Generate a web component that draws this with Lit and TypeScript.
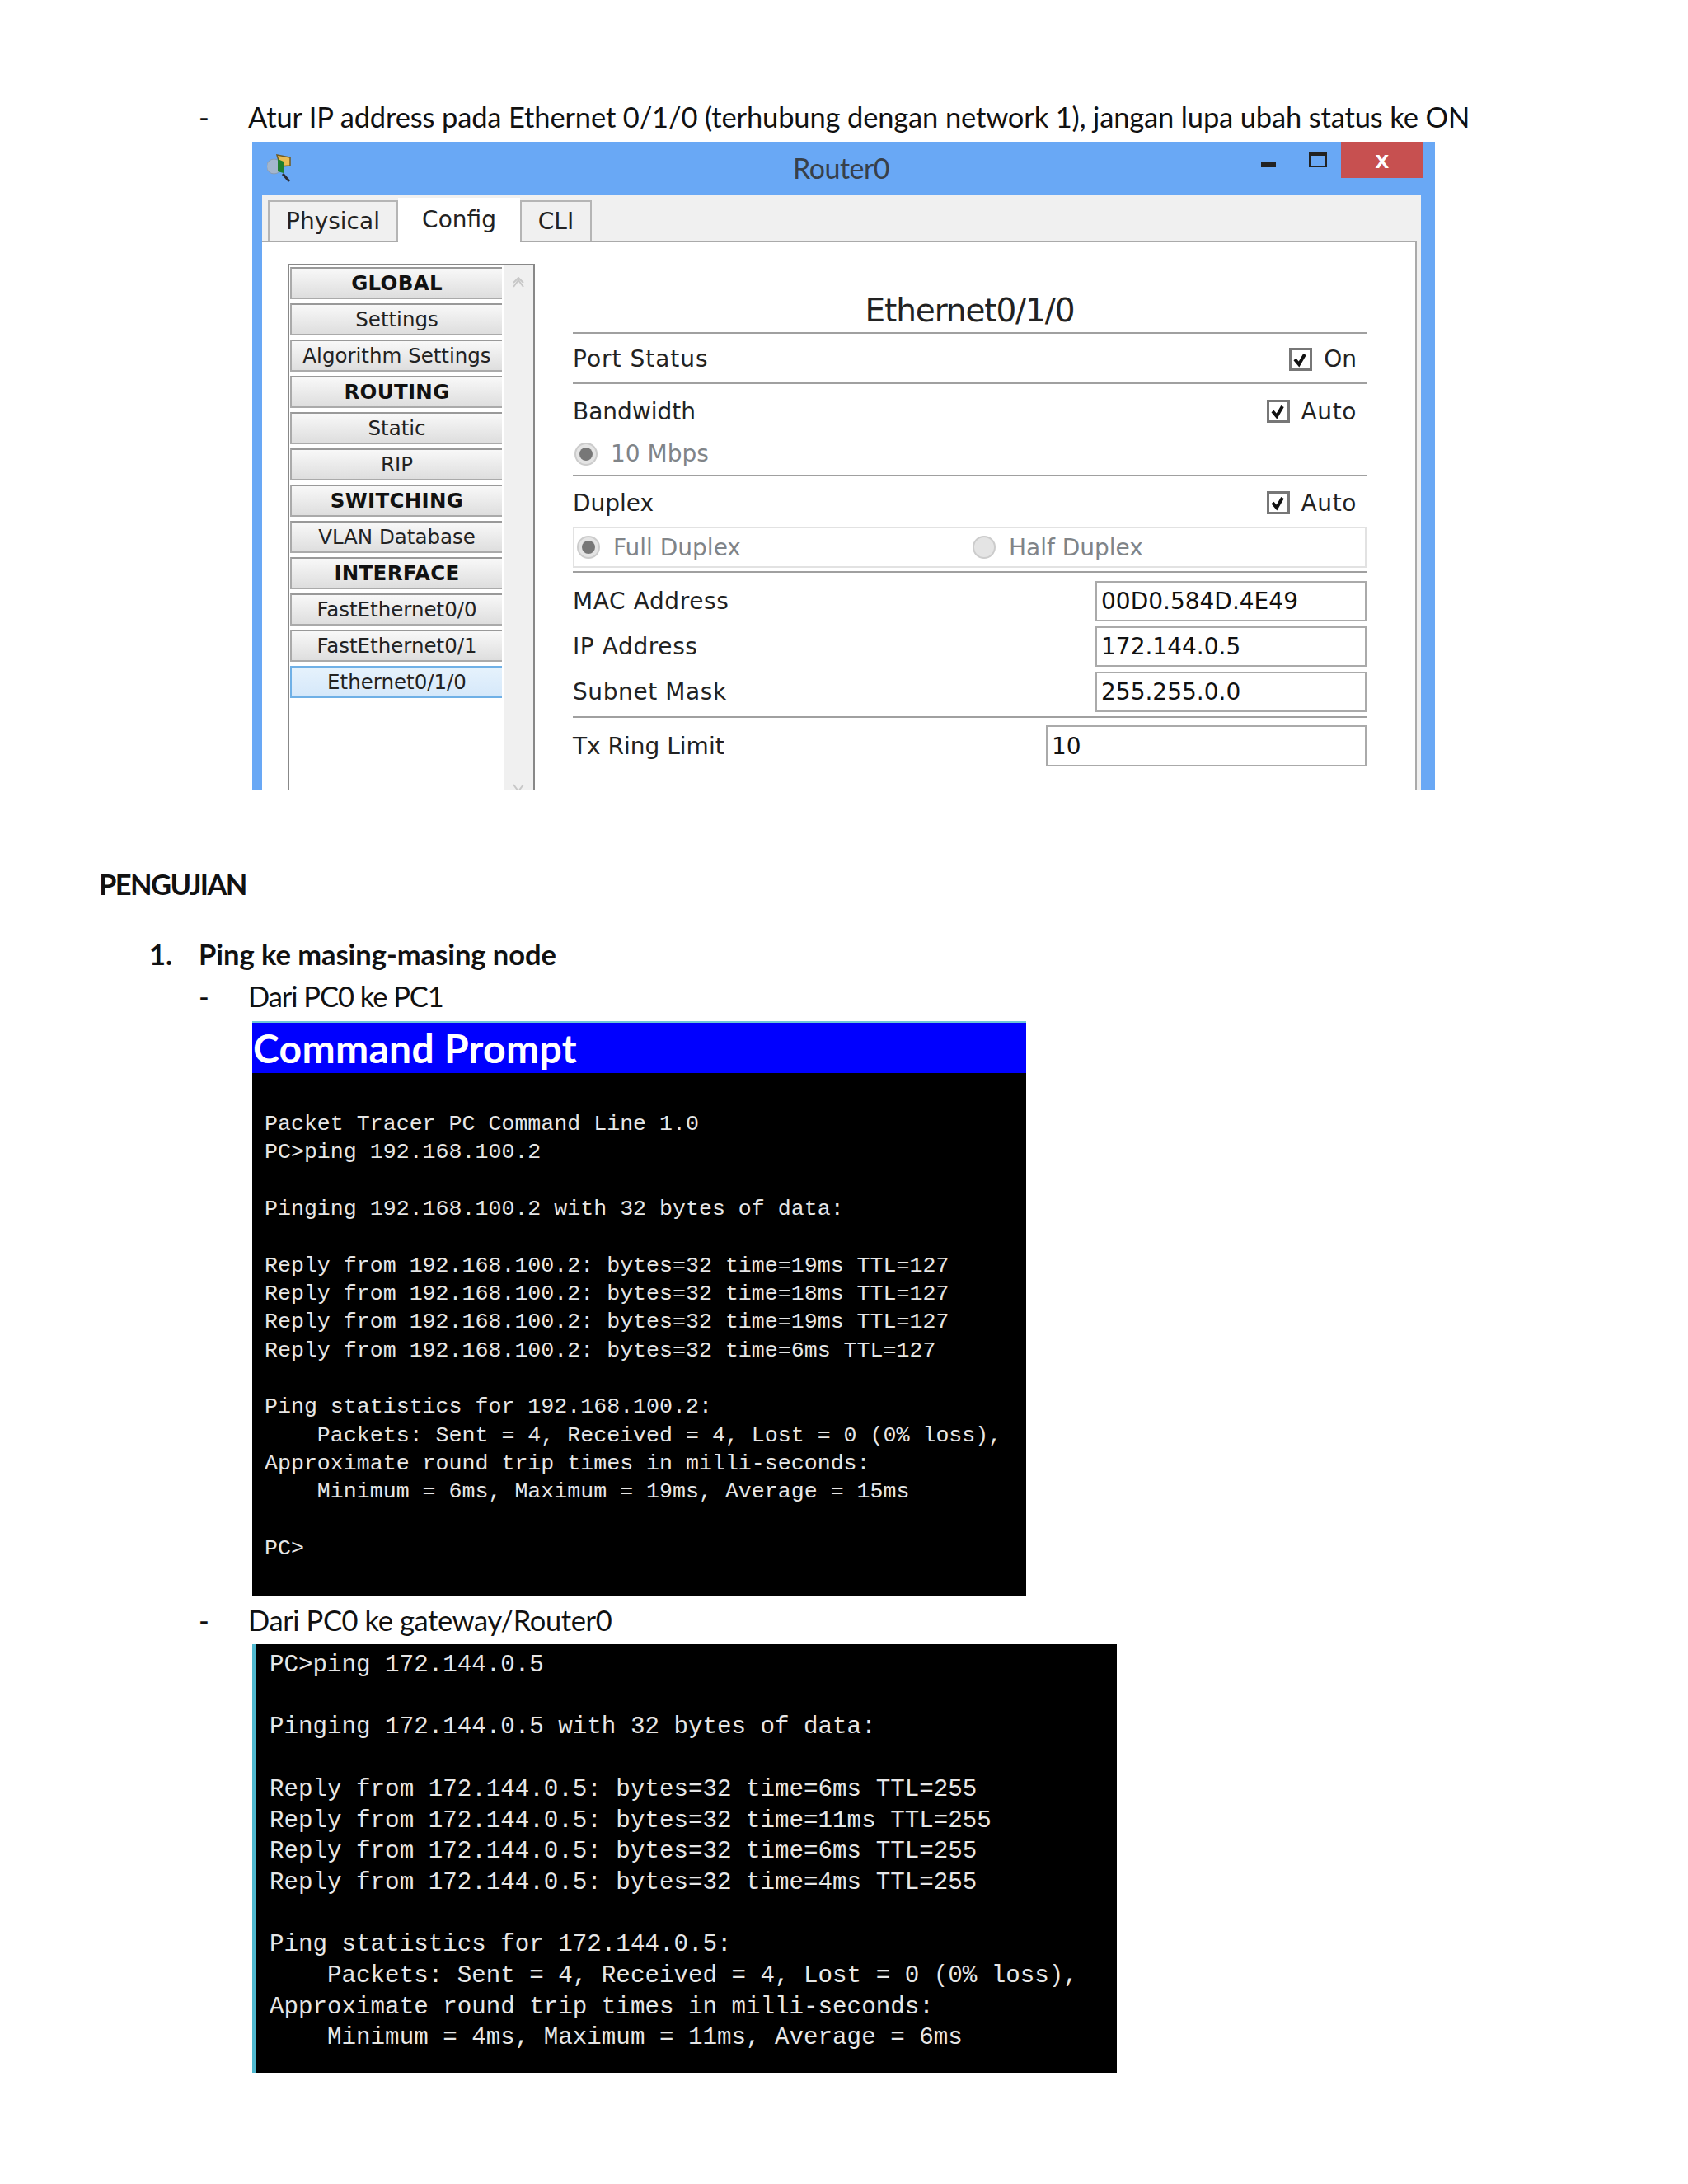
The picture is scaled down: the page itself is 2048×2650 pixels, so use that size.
import { LitElement, html, css } from "lit";
import { customElement } from "lit/decorators.js";

const NAV: [string, number][] = [
  ["GLOBAL", 1], ["Settings", 0], ["Algorithm Settings", 0], ["ROUTING", 1], ["Static", 0], ["RIP", 0],
  ["SWITCHING", 1], ["VLAN Database", 0], ["INTERFACE", 1], ["FastEthernet0/0", 0], ["FastEthernet0/1", 0], ["Ethernet0/1/0", 2],
];

const T1 = `Packet Tracer PC Command Line 1.0
PC>ping 192.168.100.2

Pinging 192.168.100.2 with 32 bytes of data:

Reply from 192.168.100.2: bytes=32 time=19ms TTL=127
Reply from 192.168.100.2: bytes=32 time=18ms TTL=127
Reply from 192.168.100.2: bytes=32 time=19ms TTL=127
Reply from 192.168.100.2: bytes=32 time=6ms TTL=127

Ping statistics for 192.168.100.2:
    Packets: Sent = 4, Received = 4, Lost = 0 (0% loss),
Approximate round trip times in milli-seconds:
    Minimum = 6ms, Maximum = 19ms, Average = 15ms

PC>`;

const T2 = `PC>ping 172.144.0.5

Pinging 172.144.0.5 with 32 bytes of data:

Reply from 172.144.0.5: bytes=32 time=6ms TTL=255
Reply from 172.144.0.5: bytes=32 time=11ms TTL=255
Reply from 172.144.0.5: bytes=32 time=6ms TTL=255
Reply from 172.144.0.5: bytes=32 time=4ms TTL=255

Ping statistics for 172.144.0.5:
    Packets: Sent = 4, Received = 4, Lost = 0 (0% loss),
Approximate round trip times in milli-seconds:
    Minimum = 4ms, Maximum = 11ms, Average = 6ms`;

const check = html`<svg class="chk" viewBox="0 0 28 28"><rect x="1.5" y="1.5" width="25" height="25" fill="#fff" stroke="#777" stroke-width="3"/><path d="M7 14l5 6 7-12" fill="none" stroke="#111" stroke-width="4"/></svg>`;

@customElement("app-root")
export class AppRoot extends LitElement {
  static styles = css`
    :host { display: block; background: #fff; width: 2048px; height: 2650px; overflow: hidden; }
    .page { padding-top: 123px; font-family: Lato, "Liberation Sans", sans-serif; font-size: 34.5px; color: #111; }
    .line { display: flex; height: 40px; line-height: 38px; white-space: nowrap; }
    .dash { width: 60px; }
    .l1 { padding-left: 241px; letter-spacing: -0.15px; }
    .l2 { padding-left: 241px; margin-top: 12px; }
    .l2 .t { letter-spacing: -1.05px; }
    .l3 { padding-left: 241px; margin-top: 10px; }
    .l3 .t { letter-spacing: -0.4px; }
    .head { padding-left: 120px; margin-top: 94px; font-weight: 700; letter-spacing: -1.6px; line-height: 40px; }
    .num { padding-left: 181px; margin-top: 45px; font-weight: 700; letter-spacing: -0.04px; line-height: 40px; }
    .num span:first-child { width: 60px; }

    .win { margin: 9px 0 0 306px; width: 1435px; height: 787px; overflow: hidden; background: #69a8f5; display: flex; flex-direction: column; }
    .bar { height: 65px; flex: none; position: relative; display: flex; align-items: center; justify-content: center; padding: 0 6px 3px 0; box-sizing: border-box; font-size: 34px; letter-spacing: -0.5px; color: #37404a; }
    .ico { position: absolute; left: 18px; top: 14px; width: 34px; height: 36px; }
    .min { position: absolute; left: 1224px; top: 25px; width: 18px; height: 6px; background: #222; }
    .max { position: absolute; left: 1282px; top: 13px; width: 22px; height: 18px; box-sizing: border-box; border: 2px solid #222; border-top-width: 4px; }
    .close { position: absolute; left: 1321px; top: 0; width: 99px; height: 44px; background: #c75050; color: #fff; display: flex; align-items: center; justify-content: center; font: 700 30px "Liberation Sans", sans-serif; }

    .inner { flex: 1; margin: 0 17px 0 12px; background: #f0f0f0; display: flex; flex-direction: column; min-height: 0; }
    .tabs { height: 55px; flex: none; display: flex; align-items: flex-end; padding-left: 7px; font: 28px "DejaVu Sans", sans-serif; }
    .tab { height: 49px; box-sizing: border-box; border: 2px solid #b5b5b5; border-bottom: 0; background: #f0f0f0; display: flex; align-items: center; justify-content: center; color: #222; }
    .tab.on { height: 54px; background: #fff; border: 0; color: #222; padding-bottom: 2px; position: relative; top: 2px; }
    .panel { flex: 1; min-height: 0; margin-right: 5px; background: #fff; border-top: 2px solid #aaa; border-right: 2px solid #aaa; display: flex; gap: 46px; padding: 26px 0 0 31px; box-sizing: border-box; }

    .side { width: 300px; flex: none; height: 700px; box-sizing: border-box; border: 2px solid #888; border-bottom: 0; display: flex; gap: 2px; padding: 2px 0 0 1px; }
    .nav { width: 257px; flex: none; display: flex; flex-direction: column; gap: 5px; }
    .nb { height: 39px; flex: none; box-sizing: border-box; border: 2px solid #aaa; border-right: 0; border-top-color: #999; background: linear-gradient(#f8f8f8, #dedede); display: flex; align-items: center; justify-content: center; font: 24.5px "DejaVu Sans", sans-serif; color: #222; white-space: nowrap; }
    .nb.b { font-weight: 700; color: #111; letter-spacing: 0.3px; }
    .nb.s { background: linear-gradient(#e6f2fc, #d5e8fa); border-color: #6fb0e6; }
    .sb { flex: 1; background: #f0f0f0; position: relative; margin-top: -2px; }
    .arr { position: absolute; left: 10px; width: 16px; height: 14px; }

    .form { width: 963px; flex: none; font: 28px "DejaVu Sans", sans-serif; color: #222; }
    .rule { border-bottom: 2px solid #a0a0a0; }
    .title { height: 85px; box-sizing: border-box; display: flex; align-items: flex-end; justify-content: center; padding-bottom: 4px; font: 39px "DejaVu Sans", sans-serif; letter-spacing: -1.15px; line-height: 44px; color: #222; }
    .row { display: flex; align-items: center; justify-content: space-between; }
    .r1 { height: 61px; box-sizing: border-box; padding-top: 2px; }
    .r2 { height: 66px; box-sizing: border-box; }
    .chkl { display: flex; align-items: center; gap: 14px; padding-right: 12px; }
    .auto { letter-spacing: 0.6px; }
    .chk { width: 28px; height: 28px; flex: none; }
    .dis { color: #808488; display: flex; align-items: center; gap: 16px; }
    .rad { width: 28px; height: 28px; flex: none; box-sizing: border-box; border-radius: 50%; border: 2px solid #ccc; background: #e4e4e4; position: relative; }
    .rad.on::after { content: ""; position: absolute; inset: 4px; border-radius: 50%; background: #777; }
    .r3 { height: 44px; padding: 2px 0 0 2px; align-items: flex-start; box-sizing: border-box; justify-content: flex-start; }
    .r4 { height: 61px; padding-top: 3px; box-sizing: border-box; }
    .dbox { height: 50px; box-sizing: border-box; border: 2px solid #e2e2e2; display: flex; align-items: center; padding-left: 3px; }
    .dbox .dis:first-child { width: 480px; }
    .rule2 { height: 6px; box-sizing: border-box; border-bottom: 2px solid #a0a0a0; }
    .addr { padding: 10px 0 5px; display: flex; flex-direction: column; gap: 6px; }
    .inp { height: 49px; box-sizing: border-box; border: 2px solid #aaa; display: flex; align-items: center; padding-left: 5px; color: #111; }
    .i1 { width: 329px; }
    .i2 { width: 389px; height: 50px; }
    .tx { padding-top: 9px; }
    .wide { letter-spacing: 1px; }
    .wider { letter-spacing: 0.6px; }

    .t1 { margin: 9px 0 0 306px; width: 939px; height: 698px; background: #000; border-top: 2px solid #6fc6d8; box-sizing: border-box; }
    .t1h { height: 61px; background: #0000ff; color: #fff; font: 700 48px/62px Lato, sans-serif; letter-spacing: 0.3px; white-space: nowrap; padding-left: 1px; }
    .mono { margin: 0; font-family: "Liberation Mono", monospace; color: #e6e6e6; white-space: pre; font-weight: 400; }
    .t1 .mono { font-size: 26.62px; line-height: 34.35px; padding: 45px 0 0 15px; }
    .t2 { margin: 8px 0 0 306px; width: 1049px; height: 520px; background: #000; border-left: 5px solid #4fb8cf; box-sizing: border-box; }
    .t2 .mono { font-size: 29.2px; line-height: 37.7px; padding: 7px 0 0 16px; }
  `;

  render() {
    return html`<div class="page">
      <div class="line l1"><span class="dash">-</span><span class="t">Atur IP address pada Ethernet 0/1/0 (terhubung dengan network 1), jangan lupa ubah status ke ON</span></div>
      <div class="win">
        <div class="bar">
          <svg class="ico" viewBox="0 0 34 36">
            <circle cx="8.5" cy="16" r="9" fill="#a3b6cd" stroke="#8a9db2" stroke-width="1"/>
            <path d="M12 2l16 3v10l-12 1z" fill="#e9bd55" stroke="#6f5a22" stroke-width="1.5"/>
            <path d="M13 7l7 3v14l-7-2z" fill="#1f7f2e"/>
            <path d="M19 25l8 9" stroke="#2b2b33" stroke-width="3"/>
          </svg>
          Router0
          <span class="min"></span><span class="max"></span><span class="close">x</span>
        </div>
        <div class="inner">
          <div class="tabs">
            <div class="tab" style="width:158px">Physical</div>
            <div class="tab on" style="width:148px">Config</div>
            <div class="tab" style="width:87px">CLI</div>
          </div>
          <div class="panel">
            <div class="side">
              <div class="nav">${NAV.map(([n, k]) => html`<div class="nb ${k === 1 ? "b" : k === 2 ? "s" : ""}">${n}</div>`)}</div>
              <div class="sb">
                <svg class="arr" style="top:14px" viewBox="0 0 16 14"><path d="M2 12l6-8 6 8M2 7l6-6 6 6" fill="none" stroke="#c8c8c8" stroke-width="2"/></svg>
                <svg class="arr" style="top:628px" viewBox="0 0 16 14"><path d="M2 2l6 8 6-8" fill="none" stroke="#c8c8c8" stroke-width="2"/></svg>
              </div>
            </div>
            <div class="form">
              <div class="title rule">Ethernet0/1/0</div>
              <div class="row r1 rule"><span class="wide">Port Status</span><span class="chkl">${check}On</span></div>
              <div class="rule">
                <div class="row r2"><span>Bandwidth</span><span class="chkl auto">${check}Auto</span></div>
                <div class="row r3"><span class="dis"><span class="rad on"></span>10 Mbps</span></div>
              </div>
              <div class="row r4"><span>Duplex</span><span class="chkl auto">${check}Auto</span></div>
              <div class="dbox"><span class="dis"><span class="rad on"></span>Full Duplex</span><span class="dis"><span class="rad"></span>Half Duplex</span></div>
              <div class="rule2"></div>
              <div class="addr rule">
                <div class="row"><span class="wider">MAC Address</span><div class="inp i1">00D0.584D.4E49</div></div>
                <div class="row"><span class="wider">IP Address</span><div class="inp i1">172.144.0.5</div></div>
                <div class="row"><span class="wider">Subnet Mask</span><div class="inp i1">255.255.0.0</div></div>
              </div>
              <div class="row tx"><span>Tx Ring Limit</span><div class="inp i2">10</div></div>
            </div>
          </div>
        </div>
      </div>
      <div class="line head">PENGUJIAN</div>
      <div class="line num"><span>1.</span><span>Ping ke masing-masing node</span></div>
      <div class="line l2"><span class="dash">-</span><span class="t">Dari PC0 ke PC1</span></div>
      <div class="t1"><div class="t1h">Command Prompt</div><pre class="mono">${T1}</pre></div>
      <div class="line l3"><span class="dash">-</span><span class="t">Dari PC0 ke gateway/Router0</span></div>
      <div class="t2"><pre class="mono">${T2}</pre></div>
    </div>`;
  }
}
